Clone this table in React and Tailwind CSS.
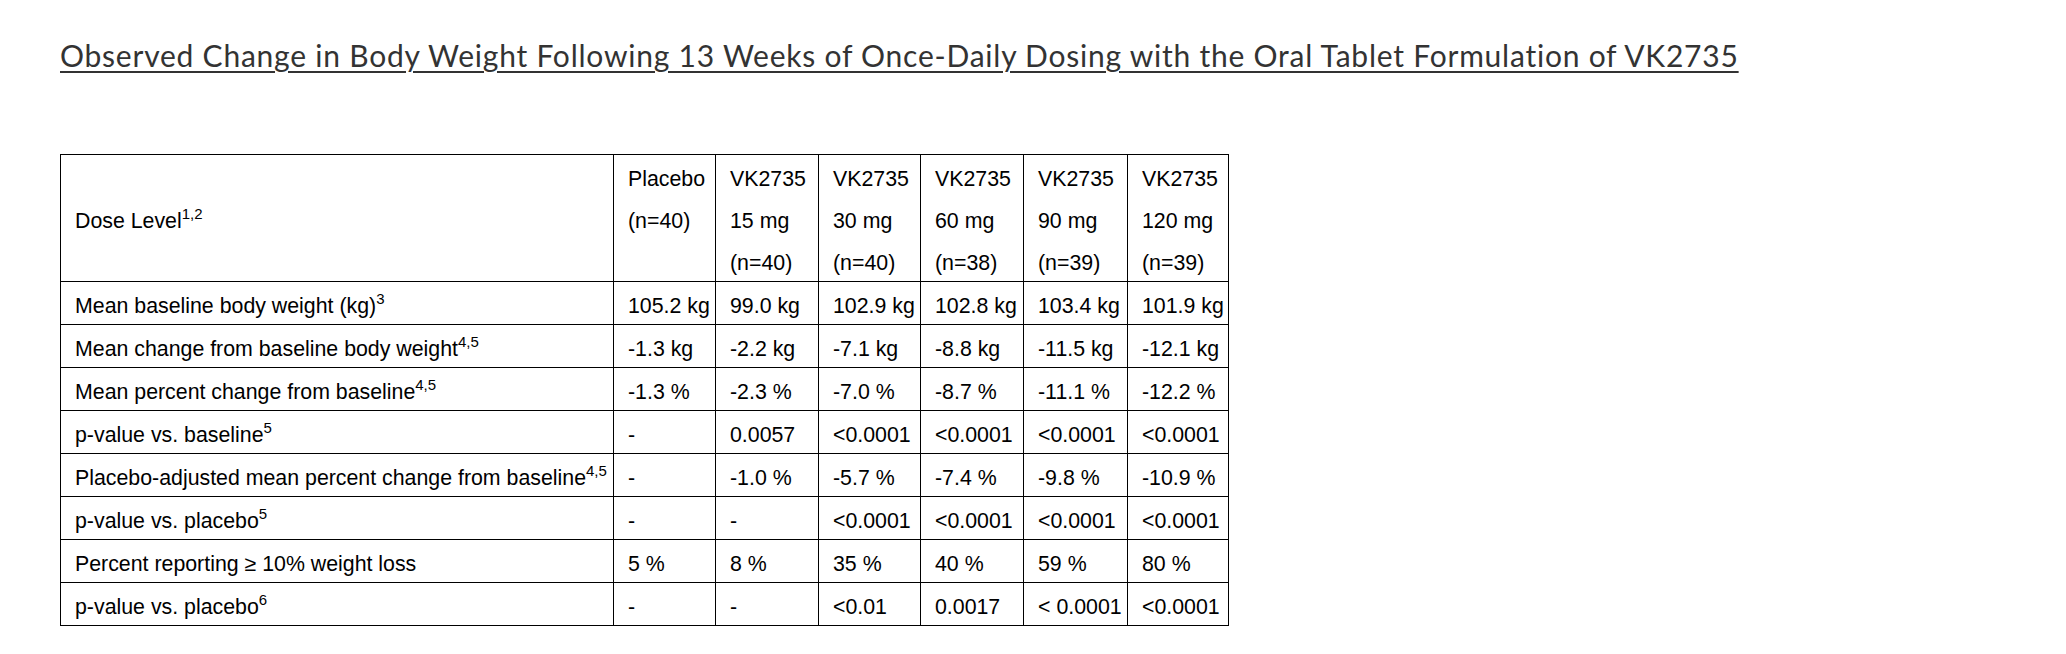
// Observed change in body weight table (VK2735 oral tablet)
const DOSES = [
  ['Placebo', '(n=40)', ''],
  ['VK2735', '15 mg', '(n=40)'],
  ['VK2735', '30 mg', '(n=40)'],
  ['VK2735', '60 mg', '(n=38)'],
  ['VK2735', '90 mg', '(n=39)'],
  ['VK2735', '120 mg', '(n=39)'],
]

const ROWS = [
  { label: 'Mean baseline body weight (kg)', sup: '3', values: ['105.2 kg', '99.0 kg', '102.9 kg', '102.8 kg', '103.4 kg', '101.9 kg'] },
  { label: 'Mean change from baseline body weight', sup: '4,5', values: ['-1.3 kg', '-2.2 kg', '-7.1 kg', '-8.8 kg', '-11.5 kg', '-12.1 kg'] },
  { label: 'Mean percent change from baseline', sup: '4,5', values: ['-1.3 %', '-2.3 %', '-7.0 %', '-8.7 %', '-11.1 %', '-12.2 %'] },
  { label: 'p-value vs. baseline', sup: '5', values: ['-', '0.0057', '<0.0001', '<0.0001', '<0.0001', '<0.0001'] },
  { label: 'Placebo-adjusted mean percent change from baseline', sup: '4,5', values: ['-', '-1.0 %', '-5.7 %', '-7.4 %', '-9.8 %', '-10.9 %'] },
  { label: 'p-value vs. placebo', sup: '5', values: ['-', '-', '<0.0001', '<0.0001', '<0.0001', '<0.0001'] },
  { label: 'Percent reporting ≥ 10% weight loss', sup: '', values: ['5 %', '8 %', '35 %', '40 %', '59 %', '80 %'] },
  { label: 'p-value vs. placebo', sup: '6', values: ['-', '-', '<0.01', '0.0017', '< 0.0001', '<0.0001'] },
]

const COL_WIDTHS = ['w-[553px]', 'w-[102px]', 'w-[103px]', 'w-[102px]', 'w-[103px]', 'w-[104px]', 'w-[101px]']

function Sup({ children }) {
  if (!children) return null
  return <sup className="text-[15px] -top-[0.6em]">{children}</sup>
}

export default function App() {
  return (
    <div className="min-h-screen bg-white px-[60px] pt-[37px]">
      <h2 className="font-['Lato',sans-serif] text-[30px] leading-[36px] font-normal tracking-[0.77px] text-[#333] underline decoration-2 underline-offset-4">
        Observed Change in Body Weight Following 13 Weeks of Once-Daily Dosing with the Oral Tablet Formulation of VK2735
      </h2>

      <table className="mt-[81px] w-[1168px] table-fixed border-collapse border border-black font-['Liberation_Sans',Arial,sans-serif] text-[21.33px] leading-[24px] text-black">
        <colgroup>
          {COL_WIDTHS.map((w, i) => (
            <col key={i} className={w} />
          ))}
        </colgroup>
        <thead>
          <tr>
            <th className="border border-black px-[14px] pt-3 pb-1.5 text-left font-normal align-middle">
              Dose Level<Sup>1,2</Sup>
            </th>
            {DOSES.map((d, i) => (
              <th key={i} className="border border-black pl-[14px] pr-0 text-left font-normal align-top whitespace-nowrap">
                {d.map((line, j) => (
                  <div key={j} className="h-[42px] pt-3 pb-1.5">
                    {line}
                  </div>
                ))}
              </th>
            ))}
          </tr>
        </thead>
        <tbody>
          {ROWS.map((row, i) => (
            <tr key={i} className="h-[43px]">
              <td className="border border-black pl-[14px] pr-1 pt-3 pb-1.5 align-middle whitespace-nowrap">
                {row.label}
                <Sup>{row.sup}</Sup>
              </td>
              {row.values.map((v, j) => (
                <td key={j} className="border border-black pl-[14px] pr-0 pt-3 pb-1.5 align-middle whitespace-nowrap">
                  {v}
                </td>
              ))}
            </tr>
          ))}
        </tbody>
      </table>
    </div>
  )
}
